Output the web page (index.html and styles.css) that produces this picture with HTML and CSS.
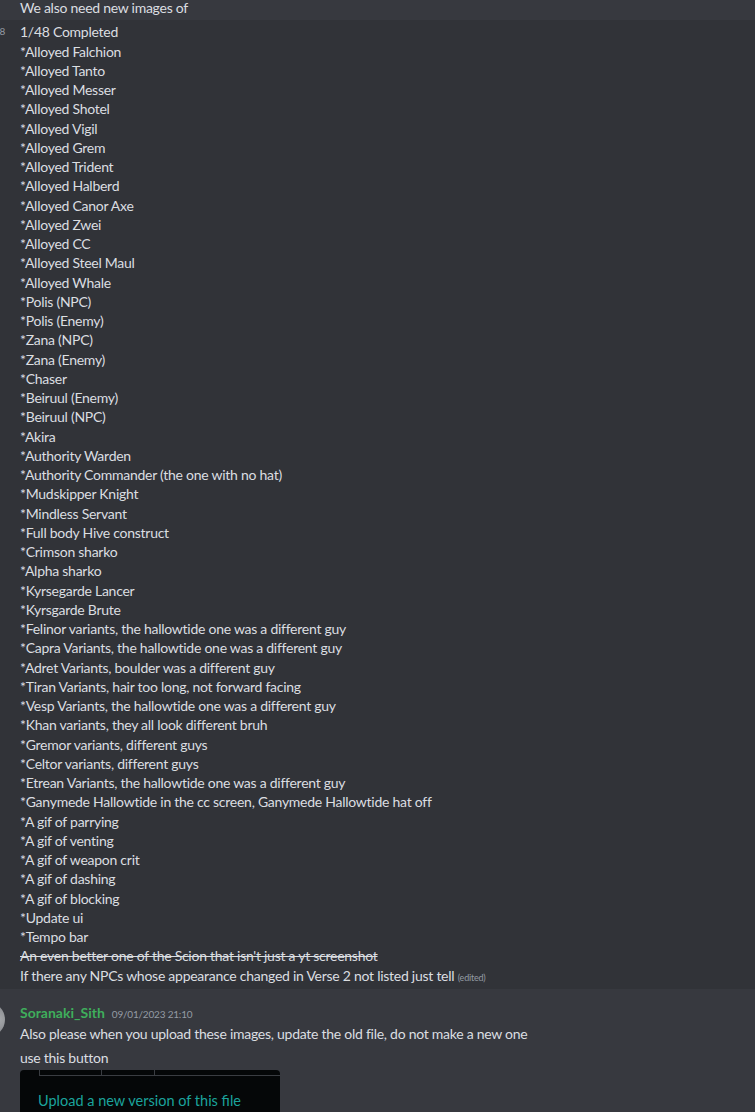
FILE: index.html
```html
<!DOCTYPE html>
<html lang="en">
<head>
<meta charset="utf-8">
<title>Chat</title>
<link rel="stylesheet" href="styles.css">
</head>
<body>
<div class="chat">
  <div class="msg first">
    <div class="content">We also need new images of</div>
  </div>
  <div class="msg hovered">
    <span class="gutter-time">21:08</span>
    <div class="content">
      <div>1/48 Completed</div>
      <div>*Alloyed Falchion</div>
      <div>*Alloyed Tanto</div>
      <div>*Alloyed Messer</div>
      <div>*Alloyed Shotel</div>
      <div>*Alloyed Vigil</div>
      <div>*Alloyed Grem</div>
      <div>*Alloyed Trident</div>
      <div>*Alloyed Halberd</div>
      <div>*Alloyed Canor Axe</div>
      <div>*Alloyed Zwei</div>
      <div>*Alloyed CC</div>
      <div>*Alloyed Steel Maul</div>
      <div>*Alloyed Whale</div>
      <div>*Polis (NPC)</div>
      <div>*Polis (Enemy)</div>
      <div>*Zana (NPC)</div>
      <div>*Zana (Enemy)</div>
      <div>*Chaser</div>
      <div>*Beiruul (Enemy)</div>
      <div>*Beiruul (NPC)</div>
      <div>*Akira</div>
      <div>*Authority Warden</div>
      <div>*Authority Commander (the one with no hat)</div>
      <div>*Mudskipper Knight</div>
      <div>*Mindless Servant</div>
      <div>*Full body Hive construct</div>
      <div>*Crimson sharko</div>
      <div>*Alpha sharko</div>
      <div>*Kyrsegarde Lancer</div>
      <div>*Kyrsgarde Brute</div>
      <div>*Felinor variants, the hallowtide one was a different guy</div>
      <div>*Capra Variants, the hallowtide one was a different guy</div>
      <div>*Adret Variants, boulder was a different guy</div>
      <div>*Tiran Variants, hair too long, not forward facing</div>
      <div>*Vesp Variants, the hallowtide one was a different guy</div>
      <div>*Khan variants, they all look different bruh</div>
      <div>*Gremor variants, different guys</div>
      <div>*Celtor variants, different guys</div>
      <div>*Etrean Variants, the hallowtide one was a different guy</div>
      <div>*Ganymede Hallowtide in the cc screen, Ganymede Hallowtide hat off</div>
      <div>*A gif of parrying</div>
      <div>*A gif of venting</div>
      <div>*A gif of weapon crit</div>
      <div>*A gif of dashing</div>
      <div>*A gif of blocking</div>
      <div>*Update ui</div>
      <div>*Tempo bar</div>
      <div><s>An even better one of the Scion that isn't just a yt screenshot</s></div>
      <div>If there any NPCs whose appearance changed in Verse 2 not listed just tell <span class="edited">(edited)</span></div>
    </div>
  </div>
  <div class="group">
    <div class="msg">
      <span class="avatar"></span>
      <div class="header"><span class="username">Soranaki_Sith</span><span class="timestamp">09/01/2023 21:10</span></div>
      <div class="content">Also please when you upload these images, update the old file, do not make a new one</div>
    </div>
    <div class="msg">
      <div class="content">use this button</div>
      <div class="attachment">
        <div class="tabs">
          <span class="tab t1"></span><span class="tab t2"></span><span class="tab t3"></span>
        </div>
        <div class="upload-text">Upload a new version of this file</div>
      </div>
    </div>
  </div>
</div>
</body>
</html>
```

FILE: styles.css
```css
html, body {
  margin: 0;
  padding: 0;
  background: #37393f;
  overflow: hidden;
}
body {
  font-family: "Lato", "Noto Sans", sans-serif;
  font-size: 14px;
  line-height: 19.25px;
  letter-spacing: -0.26px;
  color: #dbdee1;
  width: 755px;
  height: 1112px;
}
.chat {
  margin-top: -4px;
}
.msg {
  position: relative;
  padding: 2.4px 0 2.4px 20px;
}
.hovered {
  background: #313338;
}
.content div {
  white-space: nowrap;
}
.content s {
  text-decoration-thickness: 1px;
}
.gutter-time {
  position: absolute;
  right: calc(100% - 5px);
  top: 2.4px;
  font-size: 10px;
  color: #949ba4;
}
.edited {
  font-size: 9px;
  letter-spacing: -0.2px;
  color: #949ba4;
}
.group {
  margin-top: 11px;
}
.avatar {
  position: absolute;
  left: -30px;
  top: 2px;
  width: 35px;
  height: 35px;
  border-radius: 50%;
  background: radial-gradient(circle at 80% 50%, #a7a9ac 0%, #7d7f84 60%, #5b5d62 100%);
}
.header {
  display: flex;
  align-items: baseline;
  gap: 7px;
}
.username {
  color: #3fae5c;
  font-weight: 700;
  letter-spacing: 0;
}
.timestamp {
  font-size: 10px;
  letter-spacing: -0.2px;
  color: #949ba4;
}
.attachment {
  margin-top: 3px;
  width: 260px;
  height: 60px;
  background: #050708;
  border-radius: 4px 4px 0 0;
  display: flex;
  flex-direction: column;
}
.tabs {
  display: flex;
  margin-left: 19px;
  height: 5px;
  border-bottom: 1px solid #3a3d42;
}
.tab {
  border-left: 1px solid #3a3d42;
}
.t1 { width: 61px; }
.t2 { width: 52px; }
.t3 { flex: 1; }
.upload-text {
  margin: 15px 0 0 18px;
  color: #1ba39c;
  font-size: 14.5px;
  line-height: 19px;
  letter-spacing: 0;
}
```
